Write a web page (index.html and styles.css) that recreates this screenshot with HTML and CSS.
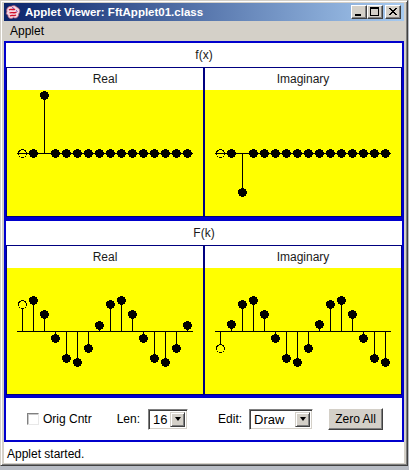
FILE: index.html
```html
<!DOCTYPE html>
<html>
<head>
<meta charset="utf-8">
<link rel="stylesheet" href="styles.css">
</head>
<body>
<div class="win">
  <div class="titlebar">
    <svg class="appicon" width="16" height="16" viewBox="0 0 16 16">
      <path d="M2 8C1 5 3 2 6 2.5 8 1 11 1.5 12 3.5 15 4 15.5 8 13.5 10 14 13 11 15 8.5 13.5 6 15.5 2.5 14 3 11 1 10.5 1 9 2 8Z" fill="#f4d6e2" stroke="#c0607a" stroke-width="0.8"/>
      <path d="M4 6C6 4 8 7 10 5M4.5 9C6.5 7.5 9 10 11.5 8M5 12C7 10.5 9 12.5 11 11" fill="none" stroke="#d0102a" stroke-width="1.3"/>
      <path d="M7 3.5L9 4.5M11 6.5L12.5 7.5" stroke="#7030a0" stroke-width="1"/>
    </svg>
    <span class="ttext">Applet Viewer: FftApplet01.class</span>
    <span class="tbtn tmin"><span class="g-min"></span></span>
    <span class="tbtn tmax"><span class="g-max"></span></span>
    <span class="tbtn tclose">
      <svg width="8" height="7" viewBox="0 0 8 7"><path d="M0 0L7 7M1 0L8 7M7 0L0 7M8 0L1 7" stroke="#000" stroke-width="1" shape-rendering="crispEdges"/></svg>
    </span>
  </div>
  <div class="menubar"><span class="menu">Applet</span></div>

  <div class="applet">
    <div class="panel">
      <div class="ptitle">f(x)</div>
      <div class="subs">
        <div class="sub">
          <div class="shead">Real</div>
          <svg class="plot" width="196" height="126" viewBox="0 0 196 126">
            <path class="ln" d="M10 63.5H186M37.5 63.5V5.5"/>
            <circle class="ho" cx="15.5" cy="63.5" r="4"/>
            <g class="dt">
              <circle cx="26.5" cy="63.5" r="4.5"/><circle cx="37.5" cy="5.5" r="4.5"/>
              <circle cx="48.5" cy="63.5" r="4.5"/><circle cx="59.5" cy="63.5" r="4.5"/>
              <circle cx="70.5" cy="63.5" r="4.5"/><circle cx="81.5" cy="63.5" r="4.5"/>
              <circle cx="92.5" cy="63.5" r="4.5"/><circle cx="103.5" cy="63.5" r="4.5"/>
              <circle cx="114.5" cy="63.5" r="4.5"/><circle cx="125.5" cy="63.5" r="4.5"/>
              <circle cx="136.5" cy="63.5" r="4.5"/><circle cx="147.5" cy="63.5" r="4.5"/>
              <circle cx="158.5" cy="63.5" r="4.5"/><circle cx="169.5" cy="63.5" r="4.5"/>
              <circle cx="180.5" cy="63.5" r="4.5"/>
            </g>
          </svg>
        </div>
        <div class="sub">
          <div class="shead">Imaginary</div>
          <svg class="plot" width="196" height="126" viewBox="0 0 196 126">
            <path class="ln" d="M10 63.5H186M37.5 63.5V102.5"/>
            <circle class="ho" cx="15.5" cy="63.5" r="4"/>
            <g class="dt">
              <circle cx="26.5" cy="63.5" r="4.5"/><circle cx="37.5" cy="102.5" r="4.5"/>
              <circle cx="48.5" cy="63.5" r="4.5"/><circle cx="59.5" cy="63.5" r="4.5"/>
              <circle cx="70.5" cy="63.5" r="4.5"/><circle cx="81.5" cy="63.5" r="4.5"/>
              <circle cx="92.5" cy="63.5" r="4.5"/><circle cx="103.5" cy="63.5" r="4.5"/>
              <circle cx="114.5" cy="63.5" r="4.5"/><circle cx="125.5" cy="63.5" r="4.5"/>
              <circle cx="136.5" cy="63.5" r="4.5"/><circle cx="147.5" cy="63.5" r="4.5"/>
              <circle cx="158.5" cy="63.5" r="4.5"/><circle cx="169.5" cy="63.5" r="4.5"/>
              <circle cx="180.5" cy="63.5" r="4.5"/>
            </g>
          </svg>
        </div>
      </div>
    </div>

    <div class="panel">
      <div class="ptitle">F(k)</div>
      <div class="subs">
        <div class="sub">
          <div class="shead">Real</div>
          <svg class="plot" width="196" height="126" viewBox="0 0 196 126">
            <path class="ln" d="M10 63.5H186M15.5 63.5V40.5M26.5 63.5V32.5M37.5 63.5V46.5M48.5 63.5V70.5M59.5 63.5V90.5M70.5 63.5V94.5M81.5 63.5V80.5M92.5 63.5V57.5M103.5 63.5V36.5M114.5 63.5V32.5M125.5 63.5V46.5M136.5 63.5V70.5M147.5 63.5V90.5M158.5 63.5V94.5M169.5 63.5V80.5M180.5 63.5V57.5"/>
            <circle class="ho" cx="15.5" cy="36.5" r="4"/>
            <g class="dt">
              <circle cx="26.5" cy="32.5" r="4.5"/><circle cx="37.5" cy="46.5" r="4.5"/>
              <circle cx="48.5" cy="70.5" r="4.5"/><circle cx="59.5" cy="90.5" r="4.5"/>
              <circle cx="70.5" cy="94.5" r="4.5"/><circle cx="81.5" cy="80.5" r="4.5"/>
              <circle cx="92.5" cy="57.5" r="4.5"/><circle cx="103.5" cy="36.5" r="4.5"/>
              <circle cx="114.5" cy="32.5" r="4.5"/><circle cx="125.5" cy="46.5" r="4.5"/>
              <circle cx="136.5" cy="70.5" r="4.5"/><circle cx="147.5" cy="90.5" r="4.5"/>
              <circle cx="158.5" cy="94.5" r="4.5"/><circle cx="169.5" cy="80.5" r="4.5"/>
              <circle cx="180.5" cy="57.5" r="4.5"/>
            </g>
          </svg>
        </div>
        <div class="sub">
          <div class="shead">Imaginary</div>
          <svg class="plot" width="196" height="126" viewBox="0 0 196 126">
            <path class="ln" d="M10 63.5H186M15.5 63.5V76.5M26.5 63.5V56.5M37.5 63.5V36.5M48.5 63.5V32.5M59.5 63.5V46.5M70.5 63.5V70.5M81.5 63.5V90.5M92.5 63.5V94.5M103.5 63.5V80.5M114.5 63.5V56.5M125.5 63.5V36.5M136.5 63.5V32.5M147.5 63.5V46.5M158.5 63.5V70.5M169.5 63.5V90.5M180.5 63.5V94.5"/>
            <circle class="ho" cx="15.5" cy="80.5" r="4"/>
            <g class="dt">
              <circle cx="26.5" cy="56.5" r="4.5"/><circle cx="37.5" cy="36.5" r="4.5"/>
              <circle cx="48.5" cy="32.5" r="4.5"/><circle cx="59.5" cy="46.5" r="4.5"/>
              <circle cx="70.5" cy="70.5" r="4.5"/><circle cx="81.5" cy="90.5" r="4.5"/>
              <circle cx="92.5" cy="94.5" r="4.5"/><circle cx="103.5" cy="80.5" r="4.5"/>
              <circle cx="114.5" cy="56.5" r="4.5"/><circle cx="125.5" cy="36.5" r="4.5"/>
              <circle cx="136.5" cy="32.5" r="4.5"/><circle cx="147.5" cy="46.5" r="4.5"/>
              <circle cx="158.5" cy="70.5" r="4.5"/><circle cx="169.5" cy="90.5" r="4.5"/>
              <circle cx="180.5" cy="94.5" r="4.5"/>
            </g>
          </svg>
        </div>
      </div>
    </div>

    <div class="controls">
      <span class="chk"></span>
      <span class="lbl lbl-orig">Orig Cntr</span>
      <span class="lbl lbl-len">Len:</span>
      <span class="combo combo-len"><span class="cval">16</span><span class="cbtn"><span class="arrow"></span></span></span>
      <span class="lbl lbl-edit">Edit:</span>
      <span class="combo combo-edit"><span class="cval">Draw</span><span class="cbtn"><span class="arrow"></span></span></span>
      <span class="btn">Zero All</span>
    </div>
  </div>

  <div class="status">Applet started.</div>
</div>
</body>
</html>
```

FILE: styles.css
```css
html, body {
  margin: 0;
  padding: 0;
}
body {
  width: 409px;
  height: 470px;
  overflow: hidden;
  background: #b8bcc4;
  font-family: "Liberation Sans", Arial, sans-serif;
  font-size: 12px;
  color: #000;
}
.win {
  width: 408px;
  height: 466px;
  box-sizing: border-box;
  background: #d4d0c8;
  border: 1px solid;
  border-color: #d4d0c8 #404040 #404040 #d4d0c8;
  box-shadow: inset 1px 1px #ffffff, inset -1px -1px #808080;
  padding: 2px 3px 2px 3px;
  display: flex;
  flex-direction: column;
}
.titlebar {
  height: 18px;
  flex: none;
  display: flex;
  align-items: center;
  background: linear-gradient(to right, #0a246a, #a6caf0);
  padding: 0 3px 0 1px;
  color: #fff;
  font-weight: bold;
  font-size: 11.5px;
}
.appicon {
  flex: none;
  display: block;
}
.ttext {
  margin-left: 4px;
  flex: 1;
  white-space: nowrap;
}
.tbtn {
  flex: none;
  width: 16px;
  height: 14px;
  box-sizing: border-box;
  background: #d4d0c8;
  border: 1px solid;
  border-color: #ffffff #404040 #404040 #ffffff;
  box-shadow: inset -1px -1px #808080;
  position: relative;
}
.tclose {
  margin-left: 2px;
  display: flex;
  align-items: center;
  justify-content: center;
}
.tclose svg {
  display: block;
  margin-top: -1px;
}
.g-min {
  position: absolute;
  left: 3px;
  top: 8px;
  width: 6px;
  height: 2px;
  background: #000;
}
.g-max {
  position: absolute;
  left: 2px;
  top: 1px;
  width: 9px;
  height: 9px;
  box-sizing: border-box;
  border: 1px solid #000;
  border-top-width: 2px;
}
.menubar {
  height: 20px;
  flex: none;
  display: flex;
  align-items: center;
  padding-left: 6px;
  font-size: 12px;
}
.applet {
  flex: none;
  background: #fff;
  display: flex;
  flex-direction: column;
}
.panel {
  border: 2px solid #0000cc;
  background: #fff;
}
.ptitle {
  height: 24px;
  display: flex;
  align-items: center;
  justify-content: center;
  color: #1a1a1a;
}
.subs {
  display: flex;
}
.sub {
  width: 198px;
  box-sizing: border-box;
  border: 1px solid #000080;
  background: #fff;
}
.shead {
  height: 22px;
  display: flex;
  align-items: center;
  justify-content: center;
  color: #1a1a1a;
}
.plot {
  display: block;
  background: #ffff00;
  shape-rendering: crispEdges;
}
.ln {
  fill: none;
  stroke: #000;
  stroke-width: 1;
}
.ho {
  fill: none;
  stroke: #000;
  stroke-width: 1;
}
.dt circle {
  fill: #000;
}
.controls {
  height: 45px;
  box-sizing: border-box;
  border: 2px solid #0000cc;
  border-top-width: 1px;
  display: flex;
  align-items: center;
  background: #fff;
}
.chk {
  flex: none;
  width: 12px;
  height: 12px;
  box-sizing: border-box;
  margin-left: 21px;
  background: #fff;
  border: 1px solid;
  border-color: #808080 #e8e8e8 #e8e8e8 #808080;
  box-shadow: inset 1px 1px #c8c8c8;
}
.lbl {
  white-space: nowrap;
}
.lbl-orig {
  margin-left: 4px;
}
.lbl-len {
  margin-left: 25px;
}
.lbl-edit {
  margin-left: 30px;
}
.combo {
  flex: none;
  height: 21px;
  box-sizing: border-box;
  border: 1px solid;
  border-color: #808080 #ffffff #ffffff #808080;
  box-shadow: inset 1px 1px #404040, inset -1px -1px #d4d0c8;
  background: #fff;
  padding: 2px;
  display: flex;
}
.combo-len {
  width: 40px;
  margin-left: 8px;
}
.combo-edit {
  width: 64px;
  margin-left: 7px;
}
.cval {
  flex: 1;
  padding-left: 2px;
  display: flex;
  align-items: center;
  font-size: 13px;
  padding-top: 1px;
}
.cbtn {
  width: 15px;
  flex: none;
  box-sizing: border-box;
  background: #d4d0c8;
  border: 1px solid;
  border-color: #d4d0c8 #404040 #404040 #d4d0c8;
  box-shadow: inset 1px 1px #ffffff, inset -1px -1px #808080;
  display: flex;
  align-items: center;
  justify-content: center;
}
.arrow {
  width: 0;
  height: 0;
  border-left: 3.5px solid transparent;
  border-right: 3.5px solid transparent;
  border-top: 4px solid #000;
}
.btn {
  flex: none;
  width: 55px;
  height: 22px;
  box-sizing: border-box;
  margin-left: 15px;
  background: #d4d0c8;
  border: 1px solid;
  border-color: #ffffff #404040 #404040 #ffffff;
  box-shadow: inset -1px -1px #808080;
  display: flex;
  align-items: center;
  justify-content: center;
  font-size: 12px;
}
.status {
  flex: 1;
  background: #fff;
  padding: 3px 0 0 3px;
  display: flex;
  align-items: center;
  font-size: 12px;
}
```
